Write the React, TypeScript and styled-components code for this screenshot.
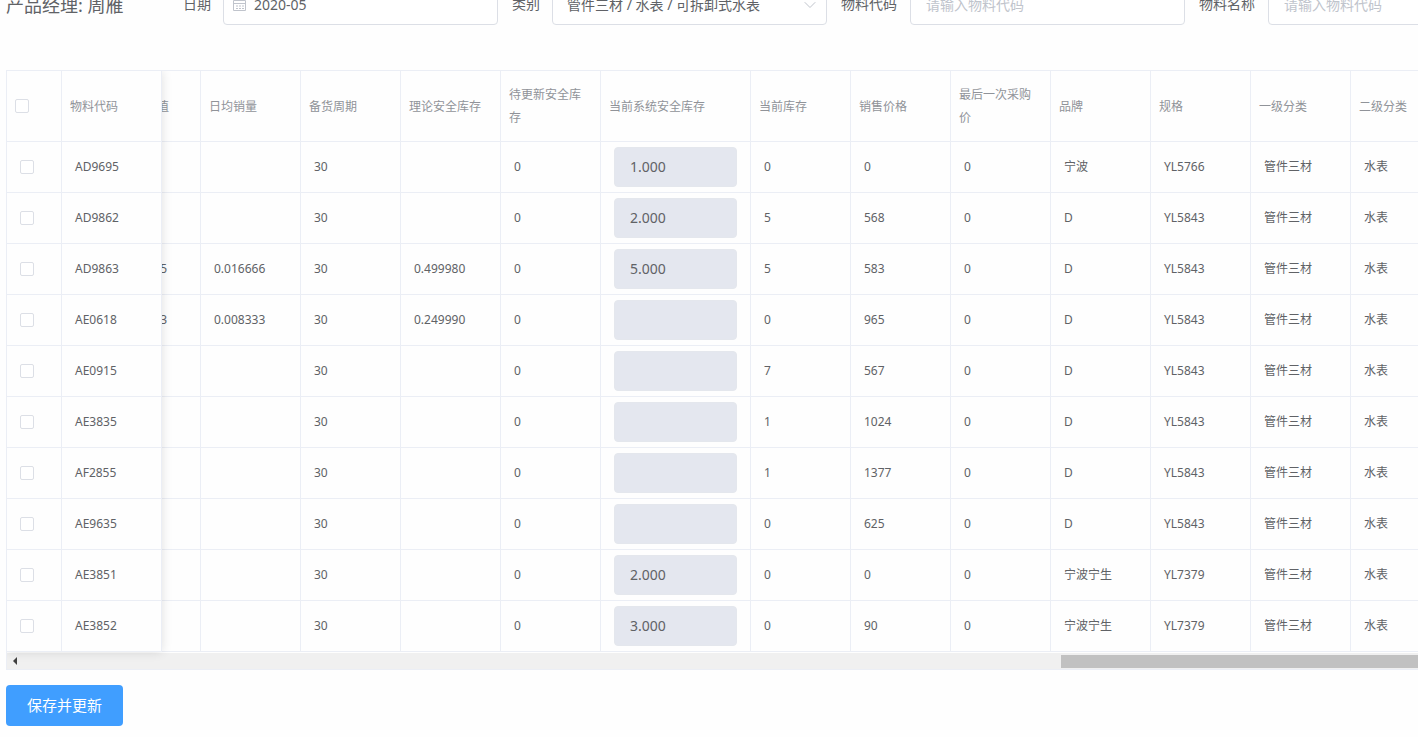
import React, { useLayoutEffect, useRef } from 'react';
import styled, { createGlobalStyle } from 'styled-components';

const GlobalStyle = createGlobalStyle`
  *, *::before, *::after { box-sizing: border-box; }
  body {
    margin: 0;
    background: #fefefe;
    color: #606266;
    font-family: "Noto Sans", "Noto Sans CJK SC", sans-serif;
    font-size: 14px;
  }
  input, select, button { font-family: inherit; }
`;

const Page = styled.main`
  padding-left: 6px;
  overflow: hidden;
`;

const Filters = styled.form`
  display: flex;
  align-items: center;
  height: 40px;
  margin: -15px 0 45px;
`;

const Manager = styled.div`
  flex: none;
  width: 177px;
  font-size: 18px;
  line-height: 40px;
  white-space: nowrap;
`;

const Field = styled.div`
  flex: none;
  display: flex;
  align-items: center;
  margin-right: 14px;
`;

const FieldLabel = styled.label<{ $wide?: boolean }>`
  min-width: ${(p) => (p.$wide ? 69 : 40)}px;
  padding-bottom: 2px;
  line-height: 38px;
  white-space: nowrap;
`;

const Control = styled.div`
  position: relative;
  width: 275px;
`;

const TextInput = styled.input<{ $withIcon?: boolean }>`
  display: block;
  width: 100%;
  height: 40px;
  padding: 0 15px 2px ${(p) => (p.$withIcon ? 30 : 15)}px;
  border: 1px solid #dcdfe6;
  border-radius: 4px;
  background: #fff;
  color: #606266;
  font-size: 14px;
  outline: none;
  &::placeholder { color: #c0c4cc; opacity: 1; }
  &:focus { border-color: #409eff; }
`;

const SelectBox = styled.select`
  display: block;
  width: 100%;
  height: 40px;
  padding: 0 30px 2px 14px;
  border: 1px solid #dcdfe6;
  border-radius: 4px;
  background: #fff;
  color: #606266;
  font-size: 14px;
  appearance: none;
  outline: none;
`;

const PrefixIcon = styled.svg`
  position: absolute;
  left: 10px;
  top: 13px;
  width: 14px;
  height: 14px;
  pointer-events: none;
`;

const SuffixIcon = styled.svg`
  position: absolute;
  right: 10px;
  top: 13px;
  width: 14px;
  height: 14px;
  pointer-events: none;
`;

const TableFrame = styled.section`
  position: relative;
  border: 1px solid #ebeef5;
  border-right: 0;
  overflow: hidden;
`;

const Scroller = styled.div`
  overflow: hidden;
  padding-bottom: 1px;
`;

const Table = styled.table`
  table-layout: fixed;
  width: 1516px;
  border-collapse: separate;
  border-spacing: 0;
  font-size: 12px;
  line-height: 23px;
`;

interface CellProps {
  $stick?: number;
  $center?: boolean;
  $control?: boolean;
}

const HeadCell = styled.th<CellProps>`
  height: 71px;
  padding: 0 8px;
  border-right: 1px solid #ebeef5;
  border-bottom: 1px solid #ebeef5;
  color: #909399;
  font-weight: 400;
  text-align: ${(p) => (p.$center ? 'center' : 'left')};
  ${(p) => p.$stick !== undefined && `position: sticky; left: ${p.$stick}px; z-index: 1; background: #fefefe;`}
`;

const Cell = styled.td<CellProps>`
  height: 51px;
  padding: 0 13px ${(p) => (p.$control ? 0 : 2)}px;
  border-right: 1px solid #ebeef5;
  border-bottom: 1px solid #ebeef5;
  white-space: nowrap;
  text-align: ${(p) => (p.$center ? 'center' : 'left')};
  ${(p) => p.$stick !== undefined && `position: sticky; left: ${p.$stick}px; z-index: 1; background: #fefefe;`}
`;

const Tick = styled.input`
  display: block;
  width: 14px;
  height: 14px;
  margin: 0;
  border: 1px solid #dcdfe6;
  border-radius: 2px;
  background: #fff;
  appearance: none;
  &:checked { background: #409eff; border-color: #409eff; }
`;

const StockInput = styled.input`
  display: block;
  width: 100%;
  height: 40px;
  padding: 0 15px 2px;
  border: 1px solid #e4e7ed;
  border-radius: 4px;
  background: #e4e7ef;
  color: #606266;
  font-size: 14px;
  outline: none;
`;

const FixedShadow = styled.div`
  position: absolute;
  z-index: 2;
  left: 0;
  top: 0;
  bottom: 17px;
  width: 155px;
  box-shadow: 0 0 10px rgba(0, 0, 0, 0.12);
  pointer-events: none;
`;

const ScrollTrack = styled.div`
  display: flex;
  align-items: center;
  justify-content: space-between;
  height: 16px;
  padding-left: 5px;
  background: #f0f0f0;
`;

const ScrollArrow = styled.svg`
  width: 6px;
  height: 8px;
`;

const ScrollThumb = styled.div`
  width: 357px;
  height: 13px;
  background: #c1c1c1;
`;

const SaveButton = styled.button`
  display: block;
  height: 41px;
  margin: 15px 0 10px;
  padding: 0 21px 2px;
  border: 0;
  border-radius: 4px;
  background: #409eff;
  color: #fff;
  font-size: 15px;
  cursor: pointer;
`;

const columnWidths = [55, 100, 111, 100, 100, 100, 100, 150, 100, 100, 100, 100, 100, 100, 100];

const headings = [
  '日均销量',
  '备货周期',
  '理论安全库存',
  '待更新安全库存',
  '当前系统安全库存',
  '当前库存',
  '销售价格',
  '最后一次采购价',
  '品牌',
  '规格',
  '一级分类',
  '二级分类',
];

interface Item {
  code: string;
  average?: string;
  daily?: string;
  theory?: string;
  safety: string;
  stock: string;
  price: string;
  brand: string;
  spec: string;
}

const items: Item[] = [
  { code: 'AD9695', safety: '1.000', stock: '0', price: '0', brand: '宁波', spec: 'YL5766' },
  { code: 'AD9862', safety: '2.000', stock: '5', price: '568', brand: 'D', spec: 'YL5843' },
  { code: 'AD9863', average: '0.01665', daily: '0.016666', theory: '0.499980', safety: '5.000', stock: '5', price: '583', brand: 'D', spec: 'YL5843' },
  { code: 'AE0618', average: '0.00833', daily: '0.008333', theory: '0.249990', safety: '', stock: '0', price: '965', brand: 'D', spec: 'YL5843' },
  { code: 'AE0915', safety: '', stock: '7', price: '567', brand: 'D', spec: 'YL5843' },
  { code: 'AE3835', safety: '', stock: '1', price: '1024', brand: 'D', spec: 'YL5843' },
  { code: 'AF2855', safety: '', stock: '1', price: '1377', brand: 'D', spec: 'YL5843' },
  { code: 'AE9635', safety: '', stock: '0', price: '625', brand: 'D', spec: 'YL5843' },
  { code: 'AE3851', safety: '2.000', stock: '0', price: '0', brand: '宁波宁生', spec: 'YL7379' },
  { code: 'AE3852', safety: '3.000', stock: '0', price: '90', brand: '宁波宁生', spec: 'YL7379' },
];

const CalendarIcon = () => (
  <PrefixIcon viewBox="0 0 14 14" fill="none" stroke="#c0c4cc" aria-hidden="true">
    <path d="M.5 2.5h12v10H.5zM.5 5.5h12M3.5 1v2M9.5 1v2" />
    <path d="M3 8h2M6 8h2M9 8h2M3 10.5h2M6 10.5h2M9 10.5h2" />
  </PrefixIcon>
);

const ChevronIcon = () => (
  <SuffixIcon viewBox="0 0 14 14" fill="none" stroke="#c0c4cc" strokeLinecap="round" aria-hidden="true">
    <path d="M2 4.500l5 5 5-5" />
  </SuffixIcon>
);

export default function App() {
  const scroller = useRef<HTMLDivElement>(null);

  // Opens with the columns scrolled under the pinned pair on the left.
  useLayoutEffect(() => {
    if (scroller.current) scroller.current.scrollLeft = 72;
  }, []);

  return (
    <>
      <GlobalStyle />
      <Page>
        <Filters>
          <Manager>产品经理: 周雁</Manager>
          <Field>
            <FieldLabel htmlFor="month">日期</FieldLabel>
            <Control>
              <TextInput id="month" $withIcon defaultValue="2020-05" />
              <CalendarIcon />
            </Control>
          </Field>
          <Field>
            <FieldLabel htmlFor="category">类别</FieldLabel>
            <Control>
              <SelectBox id="category">
                <option>管件三材 / 水表 / 可拆卸式水表</option>
              </SelectBox>
              <ChevronIcon />
            </Control>
          </Field>
          <Field>
            <FieldLabel htmlFor="code" $wide>物料代码</FieldLabel>
            <Control>
              <TextInput id="code" placeholder="请输入物料代码" />
            </Control>
          </Field>
          <Field>
            <FieldLabel htmlFor="name" $wide>物料名称</FieldLabel>
            <Control>
              <TextInput id="name" placeholder="请输入物料代码" />
            </Control>
          </Field>
        </Filters>

        <TableFrame>
          <Scroller ref={scroller}>
            <Table>
              <colgroup>
                {columnWidths.map((width, i) => (
                  <col key={i} width={width} />
                ))}
              </colgroup>
              <thead>
                <tr>
                  <HeadCell $stick={0}>
                    <Tick type="checkbox" aria-label="全选" />
                  </HeadCell>
                  <HeadCell $stick={55}>物料代码</HeadCell>
                  <HeadCell $center>月平均值</HeadCell>
                  {headings.map((text) => (
                    <HeadCell key={text}>{text}</HeadCell>
                  ))}
                </tr>
              </thead>
              <tbody>
                {items.map((item) => (
                  <tr key={item.code}>
                    <Cell $stick={0} $control>
                      <Tick type="checkbox" aria-label={item.code} />
                    </Cell>
                    <Cell $stick={55}>{item.code}</Cell>
                    <Cell $center>{item.average}</Cell>
                    <Cell>{item.daily}</Cell>
                    <Cell>30</Cell>
                    <Cell>{item.theory}</Cell>
                    <Cell>0</Cell>
                    <Cell $control>
                      <StockInput aria-label={`${item.code} 当前系统安全库存`} defaultValue={item.safety} />
                    </Cell>
                    <Cell>{item.stock}</Cell>
                    <Cell>{item.price}</Cell>
                    <Cell>0</Cell>
                    <Cell>{item.brand}</Cell>
                    <Cell>{item.spec}</Cell>
                    <Cell>管件三材</Cell>
                    <Cell>水表</Cell>
                  </tr>
                ))}
              </tbody>
            </Table>
          </Scroller>
          <FixedShadow />
          <ScrollTrack>
            <ScrollArrow viewBox="0 0 6 8" aria-hidden="true">
              <path d="M5 0v8L1 4z" fill="#404040" />
            </ScrollArrow>
            <ScrollThumb />
          </ScrollTrack>
        </TableFrame>

        <SaveButton type="button">保存并更新</SaveButton>
      </Page>
    </>
  );
}
